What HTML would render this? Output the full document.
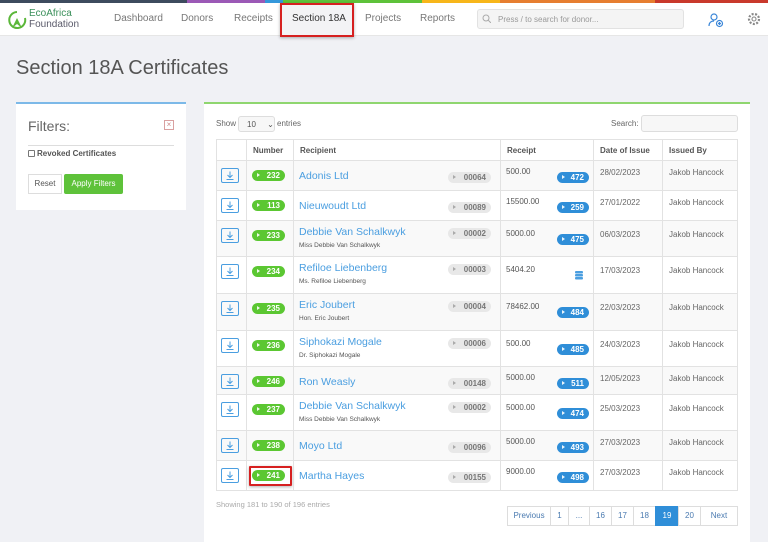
<!DOCTYPE html>
<html><head><meta charset="utf-8"><style>
*{box-sizing:border-box;margin:0;padding:0}
body{width:768px;height:536px;overflow:hidden;background:#f0f1f5;font-family:"Liberation Sans",sans-serif;position:relative;color:#555}
.bar{position:absolute;top:0;height:3px}
.nav{position:absolute;top:3px;left:0;width:768px;height:33px;background:#fff;border-bottom:1px solid #e6e6e6}
.nav a{position:absolute;top:10px;font-size:10px;color:#777}
.abs{position:absolute}
.card{position:absolute;background:#fff}
.row{position:absolute;left:216px;width:522px;border-top:1px solid #e2e2e2}
.row div{position:absolute;top:0;height:100%;border-left:1px solid #e2e2e2}
.dl{position:absolute;left:5px;width:18px;height:15px;border:1px solid #4a9ee0;border-radius:2px}
.gb{position:absolute;left:5px;width:33px;height:11px;border-radius:6px;background:#5bc732;color:#fff;font-size:8px;font-weight:bold;line-height:11px;text-align:right;padding-right:5px}
.gb:before,.bb:before,.gr:before{content:"";position:absolute;left:5px;top:3px;border-left:3px solid rgba(255,255,255,.9);border-top:2.5px solid transparent;border-bottom:2.5px solid transparent}
.nm{position:absolute;left:5px;font-size:10.5px;color:#4a9ee0;white-space:nowrap}
.sub{position:absolute;left:5px;font-size:6.5px;color:#555;white-space:nowrap}
.gr{position:absolute;left:154px;width:43px;height:11px;border-radius:6px;background:#e8e8e8;color:#777;font-size:8px;font-weight:bold;line-height:11px;text-align:right;padding-right:5px}
.gr:before{border-left-color:#aaa}
.amt{position:absolute;left:5px;font-size:8px;color:#555}
.bb{position:absolute;left:56px;width:32px;height:11px;border-radius:6px;background:#2f8ed8;color:#fff;font-size:8px;font-weight:bold;line-height:11px;text-align:right;padding-right:5px}
.tx{position:absolute;left:6px;font-size:8px;color:#666;white-space:nowrap}
.pg{position:absolute;top:506px;height:20px;border:1px solid #ddd;font-size:8px;color:#4a7ab0;text-align:center;line-height:18px;background:#fff}
</style></head><body>
<div class="bar" style="left:0;width:187px;background:#3d4b5e"></div>
<div class="bar" style="left:187px;width:78px;background:#9b59b6"></div>
<div class="bar" style="left:265px;width:18px;background:#3498db"></div>
<div class="bar" style="left:283px;width:139px;background:#5ec23a"></div>
<div class="bar" style="left:422px;width:78px;background:#f7b61a"></div>
<div class="bar" style="left:500px;width:155px;background:#e67e30"></div>
<div class="bar" style="left:655px;width:113px;background:#c9392c"></div>
<div class="nav">
<svg class="abs" style="left:6px;top:7px" width="22" height="20" viewBox="0 0 22 20"><path d="M11 2 A8 8 0 1 0 19 8" fill="none" stroke="#5bb73a" stroke-width="2"/><path d="M6 18 L11 8 L16 18 L11 14Z" fill="#5bb73a"/></svg>
<div class="abs" style="left:29px;top:5px;font-size:10px;line-height:11px;color:#3a8f5a">EcoAfrica<br><span style="color:#5a5a6a">Foundation</span></div>
<a style="left:114px">Dashboard</a><a style="left:181px">Donors</a><a style="left:234px">Receipts</a>
<div class="abs" style="left:280px;top:0;width:74px;height:34px;background:#f3f3f5;border:2px solid #d62020;box-shadow:0 1px 3px rgba(0,0,0,.3)"></div>
<a style="left:292px;color:#333">Section 18A</a><a style="left:365px">Projects</a><a style="left:420px">Reports</a>
<div class="abs" style="left:477px;top:6px;width:207px;height:20px;background:#f4f4f4;border:1px solid #e2e2e2;border-radius:3px;font-size:8px;color:#999;padding:5px 0 0 20px">Press / to search for donor...</div>
<svg class="abs" style="left:482px;top:11px" width="9" height="9"><circle cx="4" cy="4" r="3" fill="none" stroke="#aaa"/><path d="M6 6L9 9" stroke="#aaa"/></svg>
<svg class="abs" style="left:708px;top:9px" width="16" height="16" viewBox="0 0 16 16" fill="none" stroke="#3a86d8" stroke-width="1.2"><circle cx="6" cy="5" r="3"/><path d="M1 14c0-4 3-5 5-5"/><circle cx="11.5" cy="11.5" r="3"/><path d="M11.5 10v3M10 11.5h3"/></svg>
<svg class="abs" style="left:747px;top:9px" width="14" height="14" viewBox="0 0 14 14" fill="none" stroke="#888" stroke-width="1.1"><circle cx="7" cy="7" r="2"/><circle cx="7" cy="7" r="5" stroke-dasharray="2 1.5" stroke-width="2.2"/></svg>
</div>
<div class="abs" style="left:16px;top:57px;font-size:20px;color:#555">Section 18A Certificates</div>
<div class="card" style="left:16px;top:102px;width:170px;height:108px;border-top:2px solid #7cb9e8">
<div class="abs" style="left:12px;top:14px;font-size:14px;color:#666">Filters:</div>
<div class="abs" style="left:148px;top:16px;width:10px;height:10px;border:1px solid #d9a0a0;font-size:8px;line-height:8px;text-align:center;color:#c88">×</div>
<div class="abs" style="left:12px;top:41px;width:146px;border-top:1px solid #ddd"></div>
<div class="abs" style="left:12px;top:46px;width:7px;height:7px;border:1px solid #777;border-radius:1px"></div>
<div class="abs" style="left:21px;top:45px;font-size:8px;font-weight:bold;color:#555">Revoked Certificates</div>
<div class="abs" style="left:12px;top:70px;width:34px;height:20px;border:1px solid #ddd;font-size:8px;line-height:18px;text-align:center">Reset</div>
<div class="abs" style="left:48px;top:70px;width:59px;height:20px;background:#5ec23a;border-radius:2px;color:#fff;font-size:8px;line-height:20px;text-align:center">Apply Filters</div>
</div>
<div class="card" style="left:204px;top:102px;width:546px;height:440px;border-top:2px solid #8fd66f"></div>
<div class="abs" style="left:216px;top:119px;font-size:8px;color:#666">Show</div>
<div class="abs" style="left:238px;top:116px;width:37px;height:16px;border:1px solid #ddd;border-radius:3px;background:#f7f7f7;font-size:8px;padding:3px 0 0 8px">10 <span style="margin-left:9px">⌄</span></div>
<div class="abs" style="left:277px;top:119px;font-size:8px;color:#666">entries</div>
<div class="abs" style="left:611px;top:119px;font-size:8px;color:#666">Search:</div>
<div class="abs" style="left:641px;top:115px;width:97px;height:17px;border:1px solid #ddd;border-radius:3px;background:#f7f7f7"></div>
<div class="row" style="top:139px;height:21px;font-size:8px;font-weight:bold;color:#555">
<div style="left:0;border:0"></div><div style="left:30px"><span class="tx" style="top:6px;color:#555">Number</span></div><div style="left:77px"><span class="tx" style="top:6px;color:#555">Recipient</span></div><div style="left:284px"><span class="tx" style="top:6px;color:#555">Receipt</span></div><div style="left:377px"><span class="tx" style="top:6px;color:#555">Date of Issue</span></div><div style="left:446px"><span class="tx" style="top:6px;color:#555">Issued By</span></div></div>
<div id="rows"></div>
<div class="abs" style="left:216px;top:490px;width:522px;border-top:1px solid #e2e2e2"></div>
<div class="abs" style="left:216px;top:139px;height:351px;border-left:1px solid #e2e2e2"></div>
<div class="abs" style="left:737px;top:139px;height:351px;border-left:1px solid #e2e2e2"></div>
<div class="abs" style="left:216px;top:500px;font-size:7.5px;color:#aaa">Showing 181 to 190 of 196 entries</div>
<div class="pg" style="left:507px;width:44px">Previous</div><div class="pg" style="left:550px;width:19px">1</div><div class="pg" style="left:568px;width:22px">...</div><div class="pg" style="left:589px;width:23px">16</div><div class="pg" style="left:611px;width:23px">17</div><div class="pg" style="left:633px;width:23px">18</div><div class="pg" style="left:655px;width:24px;background:#2f8ed8;color:#fff;border-color:#2f8ed8">19</div><div class="pg" style="left:678px;width:23px">20</div><div class="pg" style="left:700px;width:38px">Next</div>
<script>
var d=[[160,30,"232","Adonis Ltd","","00064","500.00","472","28/02/2023"],[190,30,"113","Nieuwoudt Ltd","","00089","15500.00","259","27/01/2022"],[220,36,"233","Debbie Van Schalkwyk","Miss Debbie Van Schalkwyk","00002","5000.00","475","06/03/2023"],[256,37,"234","Refiloe Liebenberg","Ms. Refiloe Liebenberg","00003","5404.20","","17/03/2023"],[293,37,"235","Eric Joubert","Hon. Eric Joubert","00004","78462.00","484","22/03/2023"],[330,36,"236","Siphokazi Mogale","Dr. Siphokazi Mogale","00006","500.00","485","24/03/2023"],[366,28,"246","Ron Weasly","","00148","5000.00","511","12/05/2023"],[394,36,"237","Debbie Van Schalkwyk","Miss Debbie Van Schalkwyk","00002","5000.00","474","25/03/2023"],[430,30,"238","Moyo Ltd","","00096","5000.00","493","27/03/2023"],[460,30,"241","Martha Hayes","","00155","9000.00","498","27/03/2023"]];
var h="";d.forEach(function(r,i){var bg=i%2==0?"#f9f9f9":"#fff";
h+='<div class="row" style="top:'+r[0]+'px;height:'+r[1]+'px;background:'+bg+'"><div style="left:0;border:0"><span class="dl" style="top:7px"><svg width="16" height="13" viewBox="0 0 16 13" style="position:absolute;left:0;top:0"><path d="M8 2.5V8.5M5.5 6L8 8.5L10.5 6M4.5 10.5H11.5" fill="none" stroke="#4a9ee0" stroke-width="1"/></svg></span></div><div style="left:30px"><span class="gb" style="top:9px">'+r[2]+'</span>'+(i==9?'<span class="abs" style="left:2px;top:5px;width:43px;height:20px;border:2px solid #d62020;border-radius:1px;box-shadow:0 1px 3px rgba(0,0,0,.3)"></span>':'')+'</div><div style="left:77px"><span class="nm" style="top:'+(r[4]?5:9)+'px">'+r[3]+'</span>'+(r[4]?'<span class="sub" style="top:21px">'+r[4]+'</span>':'')+'<span class="gr" style="top:'+(r[4]?7:11)+'px">'+r[5]+'</span></div><div style="left:284px"><span class="amt" style="top:'+(r[4]?8:6)+'px">'+r[6]+'</span>'+(r[7]?'<span class="bb" style="top:'+(r[4]?13:11)+'px">'+r[7]+'</span>':'<svg class="abs" style="left:73px;top:13px;border:0" width="10" height="10"><rect x="1" y="1" width="8" height="2.5" rx="1" fill="#4a9ee0"/><rect x="1" y="4" width="8" height="2.5" rx="1" fill="#4a9ee0"/><rect x="1" y="7" width="8" height="2.5" rx="1" fill="#4a9ee0"/></svg>')+'</div><div style="left:377px"><span class="tx" style="top:'+(r[4]?9:7)+'px">'+r[8]+'</span></div><div style="left:446px"><span class="tx" style="top:'+(r[4]?9:7)+'px">Jakob Hancock</span></div></div>';});
document.getElementById("rows").innerHTML=h;
</script>
</body></html>
